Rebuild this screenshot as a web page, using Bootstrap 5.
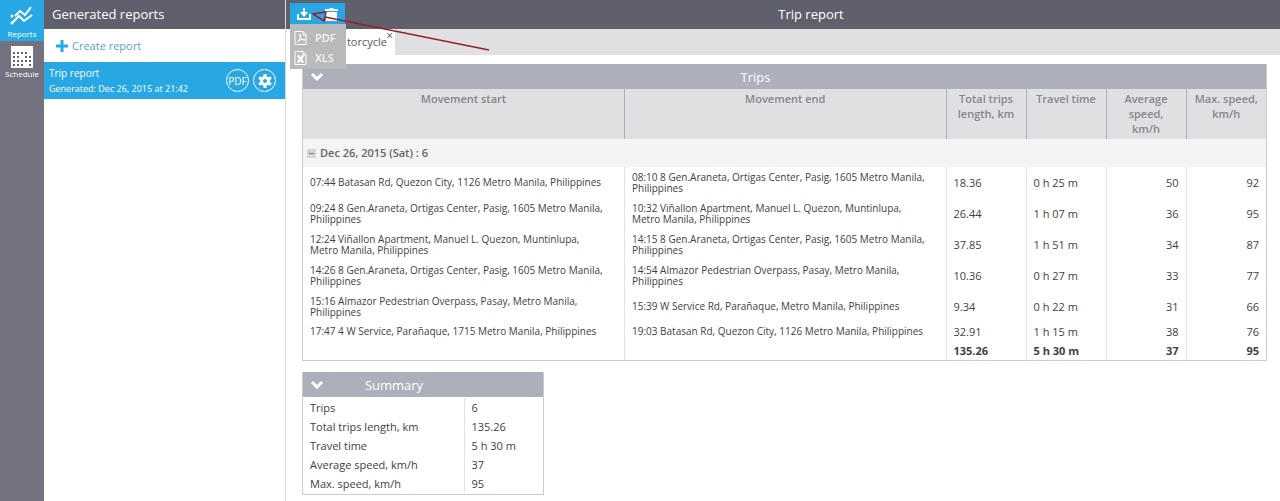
<!DOCTYPE html>
<html lang="en">
<head>
<meta charset="utf-8">
<meta name="viewport" content="width=device-width, initial-scale=1">
<title>Trip report</title>
<link href="https://cdn.jsdelivr.net/npm/bootstrap@5.3.0/dist/css/bootstrap.min.css" rel="stylesheet">
<style>
body{font-family:"Open Sans",sans-serif;font-size:11px;line-height:12px;color:#414141;background:#fff}
a{text-decoration:none}
.rail{width:44px;background:#727280}
.rail a{height:41px;color:#fff;font-size:8px;line-height:12px}
.rail a.active{background:#27a8e4}
.topbar{height:29px;background:#5f606b;color:#fff;font-size:13px;line-height:28px}
.page-title{padding-left:56px}
.side{width:242px;border-right:1px solid #d8d8dc}
.create{height:33px;color:#5a9fc7;font-size:11px}
.report{height:37px;background:#27a8e4;color:#fff;font-size:10px;padding:0 9px 0 5px}
.report .when{font-size:9px}
.round{width:23px;height:23px;border:1px solid #fff;border-radius:50%;background:none;color:#fff;font-size:10px}
.tools{left:4px;top:3px;z-index:5}
.tools .bar{width:55px;height:21px;background:#27a8e4}
.tools .bar button{background:none;border:0}
.tools .choices{width:56px;height:45px;background:#b9babc}
.choices button{background:none;border:0;color:#f4f4f4;font-size:11px;font-weight:600;line-height:16px;height:20px}
.pointer{z-index:9}
.tabs{height:26px;background:#e0e0e2}
.tab{width:109px;background:#fff;color:#555}
.tab button{background:none;border:0;font-size:12px;line-height:12px;color:#555;top:1px;right:2px}
.sheet{padding:9px 13px 0 16px}
.panel{border:1px solid #cbcbd0;border-top:0}
.panel header{height:25px;background:#adafba;color:#fff;font-size:13px;padding-right:58px}
.panel header button{background:none;border:0;left:8px;top:8px}
.panel table{table-layout:fixed;width:100%}
.num{width:80px}
th,td{border-left:1px solid #e2e2e5}
tr>:first-child{border-left:0}
td{height:31px;padding:0 7px;vertical-align:middle;line-height:11px}
td.place{font-size:10px;padding-right:15px}
.trips thead th{height:50px;background:#e0e0e2;border-color:#adafba;color:#85868c;font-weight:600;text-align:center;vertical-align:top;padding:2px 8px 0;line-height:15px}
.trips .group th{height:28px;background:#f4f4f4;color:#666;font-weight:600;padding:0 4px}
.group button{width:9px;height:9px;background:#d6d6d6;border:0}
.trips .short td,.summary td,.summary th{height:19px}
.summary{width:242px;margin-top:11px}
.summary table{margin:1px 0}
.summary th{font-weight:400;padding:0 7px;width:161px}
</style>
</head>
<body>
<div class="d-flex min-vh-100 position-relative">
  <nav class="rail d-flex flex-column flex-shrink-0">
    <a class="active d-flex flex-column align-items-center pt-1" href="#">
      <svg width="26" height="24" viewBox="0 0 26 24" fill="none" stroke="#fff" stroke-width="2"><path d="M3 19l7-7 5 5 8-6"/><path d="M6 12l5-5 5 4 6-8"/><g fill="#fff" stroke="none"><circle cx="3" cy="12" r="1.500"/><circle cx="3" cy="19" r="1.500"/></g></svg>
      <span>Reports</span>
    </a>
    <a class="d-flex flex-column align-items-center pt-1" href="#">
      <svg class="flex-shrink-0" width="22" height="23" viewBox="0 0 22 23"><path fill="#fff" d="M0 1h22v22H0z"/><path fill="none" stroke="#62626e" stroke-width="2" d="M6 8h2M10 8h2M14 8h2M2 12h2M6 12h2M14 12h2M18 12h2M2 16h2M6 16h2M10 16h2M14 16h2M18 16h2M2 20h2M6 20h2M10 20h2M18 20h2M2 8h2"/></svg>
      <span>Schedule</span>
    </a>
  </nav>
  <aside class="side flex-shrink-0 d-flex flex-column">
    <h1 class="topbar ps-2 m-0 fw-normal me-n1">Generated reports</h1>
    <a class="create d-flex align-items-center gap-1 ps-2" href="#"><svg class="ms-1" width="12" height="12" viewBox="0 0 12 12"><path d="M6 0v12M0 6h12" stroke="#27a8e4" stroke-width="3"/></svg><span>Create report</span></a>
    <div class="report d-flex align-items-center gap-1">
      <div class="flex-grow-1 text-nowrap d-flex flex-column gap-1"><span>Trip report</span><span class="when">Generated: Dec 26, 2015 at 21:42</span></div>
      <button class="round p-0 flex-shrink-0 d-flex align-items-center justify-content-center" aria-label="Open PDF"><span>PDF</span></button>
      <button class="round p-0 flex-shrink-0 d-flex align-items-center justify-content-center" aria-label="Settings"><svg width="14" height="14" viewBox="0 0 14 14"><circle cx="7" cy="7" r="3.500" fill="none" stroke="#fff" stroke-width="3"/><path d="M7 0v3M7 11v3M1 3.500l2.500 1.500M10.500 9l2.500 1.500M1 10.500L3.500 9M10.500 5L13 3.500" stroke="#fff" stroke-width="3"/></svg></button>
    </div>
  </aside>
  <main class="flex-grow-1 position-relative">
    <h2 class="topbar page-title m-0 text-center fw-normal">Trip report</h2>
    <div class="tools position-absolute">
      <div class="bar d-flex align-items-center">
        <button class="p-0 d-flex w-50 justify-content-center" aria-label="Download"><svg width="14" height="14" viewBox="0 0 14 14"><path fill="none" stroke="#fff" stroke-width="2" d="M1 7v5h12V7M7 1v6"/><path fill="#fff" d="M3 5h8l-4 5z"/></svg></button>
        <button class="p-0 d-flex w-50 justify-content-center" aria-label="Delete"><svg width="13" height="14" viewBox="0 0 13 14" fill="#fff"><path d="M0 2h4l1-1h3l1 1h4v2H0zM1 5h11v9H1z"/></svg></button>
      </div>
      <div class="choices d-flex flex-column">
        <button class="d-flex align-items-center p-0 ps-1 gap-2 mt-1"><svg width="13" height="14" viewBox="0 0 13 14" fill="none" stroke="#fff"><path d="M1 .5h8l3 3v10H1zM9 1v3h3M3 11c3-2 4-6 3-8-1 2 1 6 5 6-3-1-6 0-8 2"/></svg><span>PDF</span></button>
        <button class="d-flex align-items-center p-0 ps-1 gap-2"><svg width="13" height="14" viewBox="0 0 13 14" fill="none" stroke="#fff"><path d="M1 .5h8l3 3v10H1zM9 1v3h3"/><path stroke-width="2" d="M4 5l5 6M9 5l-5 6"/><path d="M3 5h3M7 5h3M3 11h3M7 11h3"/></svg><span>XLS</span></button>
      </div>
    </div>
    <div class="tabs"><div class="tab h-100 position-relative d-flex align-items-center justify-content-end pe-2"><span>torcycle</span><button class="p-0 position-absolute" aria-label="Close tab">×</button></div></div>
    <div class="sheet">
      <section class="panel trips">
        <header class="position-relative d-flex align-items-center justify-content-center"><button class="position-absolute p-0 d-flex" aria-label="Collapse trips"><svg width="12" height="9" viewBox="0 0 12 9"><path d="M1 2l5 5 5-5" fill="none" stroke="#fff" stroke-width="3"/></svg></button><span>Trips</span></header>
        <table>
          <colgroup><col><col><col class="num"><col class="num"><col class="num"><col class="num"></colgroup>
          <thead><tr><th>Movement start</th><th>Movement end</th><th>Total trips length, km</th><th>Travel time</th><th>Average speed, km/h</th><th>Max. speed, km/h</th></tr></thead>
          <tbody>
            <tr class="group"><th colspan="6"><div class="d-flex align-items-center gap-1"><button class="p-0 d-flex align-items-center justify-content-center" aria-label="Collapse day"><svg width="7" height="9"><path d="M1 4.500h5" stroke="#777"/></svg></button><span>Dec 26, 2015 (Sat) : 6</span></div></th></tr>
            <tr><td class="place">07:44 Batasan Rd, Quezon City, 1126 Metro Manila, Philippines</td><td class="place">08:10 8 Gen.Araneta, Ortigas Center, Pasig, 1605 Metro Manila, Philippines</td><td>18.36</td><td>0 h 25 m</td><td class="text-end">50</td><td class="text-end">92</td></tr>
            <tr><td class="place">09:24 8 Gen.Araneta, Ortigas Center, Pasig, 1605 Metro Manila, Philippines</td><td class="place">10:32 Viñallon Apartment, Manuel L. Quezon, Muntinlupa, Metro Manila, Philippines</td><td>26.44</td><td>1 h 07 m</td><td class="text-end">36</td><td class="text-end">95</td></tr>
            <tr><td class="place">12:24 Viñallon Apartment, Manuel L. Quezon, Muntinlupa, Metro Manila, Philippines</td><td class="place">14:15 8 Gen.Araneta, Ortigas Center, Pasig, 1605 Metro Manila, Philippines</td><td>37.85</td><td>1 h 51 m</td><td class="text-end">34</td><td class="text-end">87</td></tr>
            <tr><td class="place">14:26 8 Gen.Araneta, Ortigas Center, Pasig, 1605 Metro Manila, Philippines</td><td class="place">14:54 Almazor Pedestrian Overpass, Pasay, Metro Manila, Philippines</td><td>10.36</td><td>0 h 27 m</td><td class="text-end">33</td><td class="text-end">77</td></tr>
            <tr><td class="place">15:16 Almazor Pedestrian Overpass, Pasay, Metro Manila, Philippines</td><td class="place">15:39 W Service Rd, Parañaque, Metro Manila, Philippines</td><td>9.34</td><td>0 h 22 m</td><td class="text-end">31</td><td class="text-end">66</td></tr>
            <tr class="short"><td class="place">17:47 4 W Service, Parañaque, 1715 Metro Manila, Philippines</td><td class="place">19:03 Batasan Rd, Quezon City, 1126 Metro Manila, Philippines</td><td>32.91</td><td>1 h 15 m</td><td class="text-end">38</td><td class="text-end">76</td></tr>
            <tr class="short fw-bold"><td></td><td></td><td>135.26</td><td>5 h 30 m</td><td class="text-end">37</td><td class="text-end">95</td></tr>
          </tbody>
        </table>
      </section>
      <section class="panel summary">
        <header class="position-relative d-flex align-items-center justify-content-center"><button class="position-absolute p-0 d-flex" aria-label="Collapse summary"><svg width="12" height="9" viewBox="0 0 12 9"><path d="M1 2l5 5 5-5" fill="none" stroke="#fff" stroke-width="3"/></svg></button><span>Summary</span></header>
        <table>
          <tbody>
            <tr><th>Trips</th><td>6</td></tr>
            <tr><th>Total trips length, km</th><td>135.26</td></tr>
            <tr><th>Travel time</th><td>5 h 30 m</td></tr>
            <tr><th>Average speed, km/h</th><td>37</td></tr>
            <tr><th>Max. speed, km/h</th><td>95</td></tr>
          </tbody>
        </table>
      </section>
    </div>
    <svg class="pointer position-absolute top-0 start-0 pe-none" width="210" height="56" viewBox="0 0 210 56" fill="none" stroke="#96202a" stroke-width="1.500"><path d="M39 17l164 33M27 14l13-2-2 9z"/></svg>
  </main>
</div>
<script src="https://cdn.jsdelivr.net/npm/bootstrap@5.3.0/dist/js/bootstrap.bundle.min.js"></script>
</body>
</html>
